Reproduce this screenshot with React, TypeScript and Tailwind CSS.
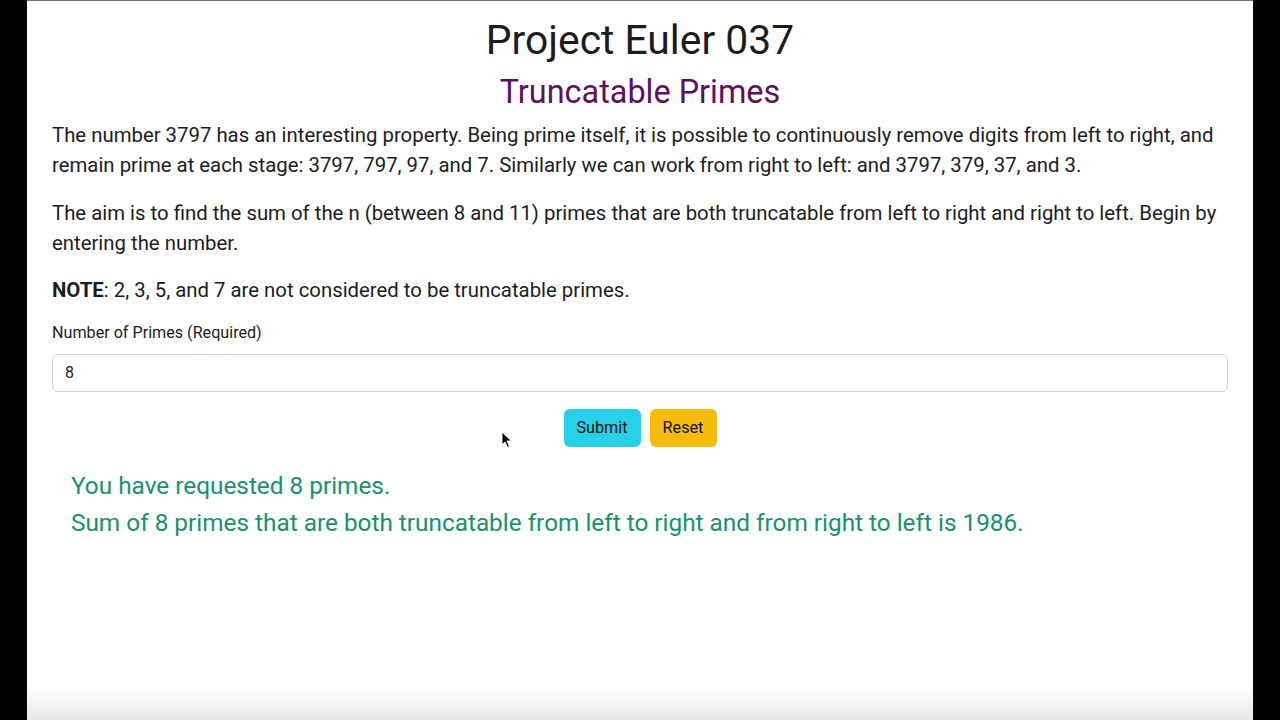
export default function App() {
  return (
    <div className="flex h-[720px] w-[1280px] overflow-hidden bg-black font-['Roboto',sans-serif]">
      <div className="relative ml-[27px] flex h-full w-[1226px] flex-col border-t border-[#6b6b6b] bg-white">
        <div className="px-[25px] pt-[15px]">
          <h1 className="text-center text-[40.8px] leading-[48px] text-[#1c1c1c]">Project Euler 037</h1>
          <h2 className="mt-[8px] text-center text-[32.4px] leading-[40px] text-[#5f0f5f]">Truncatable Primes</h2>

          <p className="mt-[8px] text-[20.35px] leading-[30px] text-[#1c1c1c]">
            The number 3797 has an interesting property. Being prime itself, it is possible to continuously remove digits from left to right, and remain prime at each stage: 3797, 797, 97, and 7. Similarly we can work from right to left: and 3797, 379, 37, and 3.
          </p>
          <p className="mt-[18px] text-[20.35px] leading-[30px] text-[#1c1c1c]">
            The aim is to find the sum of the n (between 8 and 11) primes that are both truncatable from left to right and right to left. Begin by entering the number.
          </p>
          <p className="mt-[17px] text-[20.35px] leading-[30px] text-[#1c1c1c]">
            <span className="font-bold">NOTE</span>: 2, 3, 5, and 7 are not considered to be truncatable primes.
          </p>

          <label className="mt-[16px] block text-[16.15px] leading-[24px] text-[#1c1c1c]">Number of Primes (Required)</label>
          <div className="mt-[9px] flex h-[38px] w-full items-center rounded-[6px] border border-[#d4d4d4] px-[12px] text-[16px] text-[#1c1c1c]">
            8
          </div>

          <div className="mt-[17px] flex justify-center gap-[9px]">
            <button className="h-[38px] w-[77px] rounded-[6px] bg-[#26d0e6] text-[16.2px] text-[#111]">Submit</button>
            <button className="h-[38px] w-[67px] rounded-[6px] bg-[#f7bb0c] text-[16.2px] text-[#111]">Reset</button>
          </div>

          <div className="mt-[20px] pl-[19px] text-[24.35px] leading-[37px] text-[#17926c]">
            <p>You have requested 8 primes.</p>
            <p>Sum of 8 primes that are both truncatable from left to right and from right to left is 1986.</p>
          </div>
        </div>

        <svg className="absolute left-[474px] top-[430px]" width="12" height="18" viewBox="0 0 12 18">
          <path d="M1 1 L1 14 L4 11 L6.5 16.5 L8.5 15.5 L6 10 L10.5 10 Z" fill="#000" stroke="#fff" strokeWidth="1" />
        </svg>

        <div className="mt-auto h-[34px] bg-gradient-to-b from-white to-[#e9e9e9]" />
      </div>
    </div>
  );
}
